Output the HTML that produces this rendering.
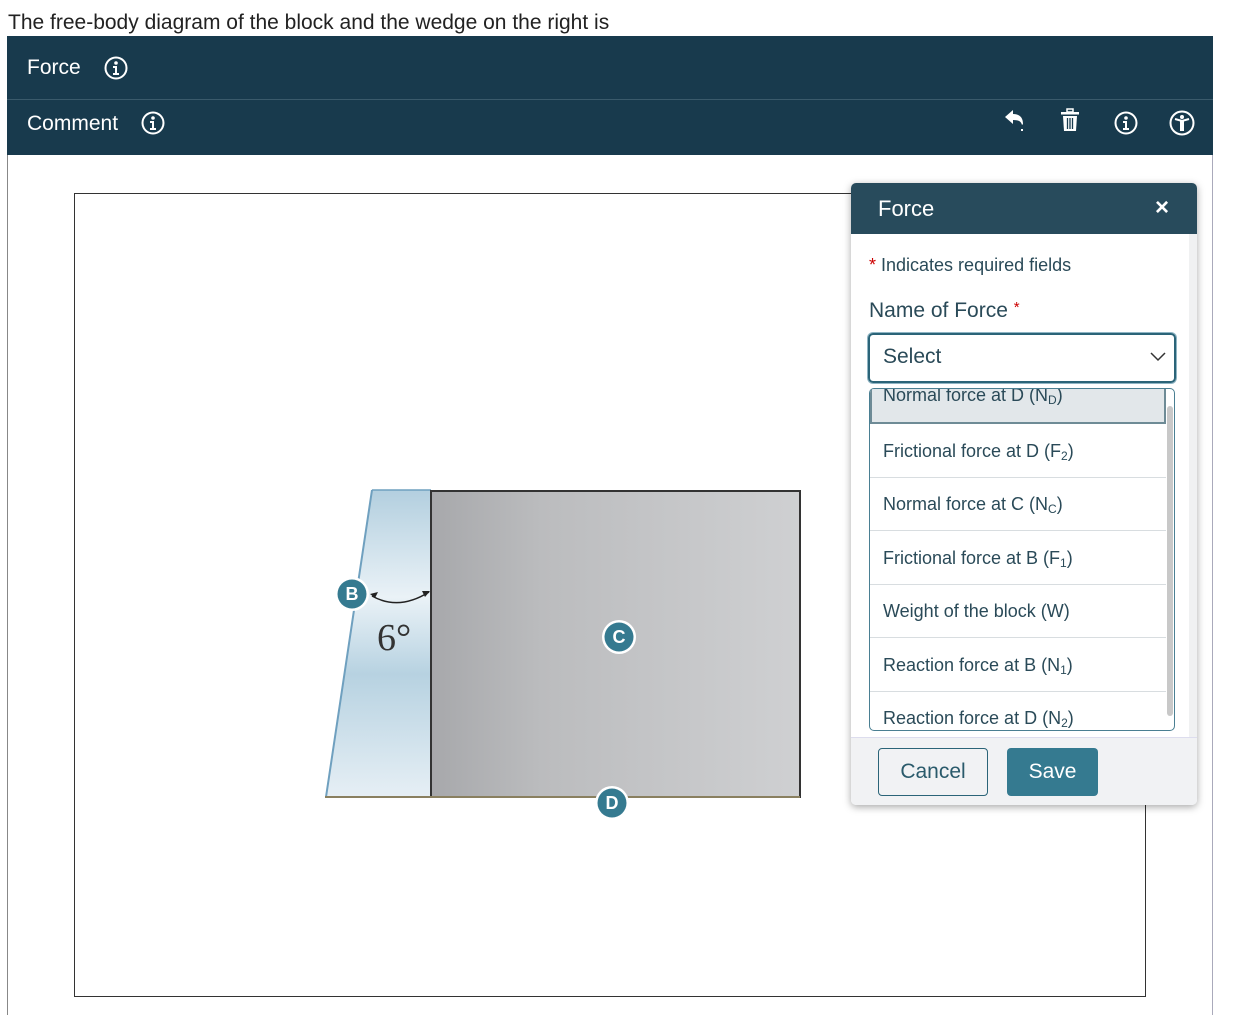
<!DOCTYPE html>
<html><head><style>
*{margin:0;padding:0;box-sizing:border-box}
body{width:1242px;height:1004px;background:#fff;font-family:"Liberation Sans",sans-serif;position:relative;overflow:hidden;color:#1f3340}
.a{position:absolute}
.t{color:#fff;font-size:21px}
.item{position:absolute;left:0;width:296px;height:54px;border-bottom:1px solid #d8dde0;font-size:18px;color:#2a4a58;padding-left:13px;line-height:54px}
sub{font-size:12px;vertical-align:-3px}
</style></head><body>
<div class="a" style="left:8px;top:11px;font-size:21px;color:#222">The free-body diagram of the block and the wedge on the right is</div>
<div class="a" style="left:7px;top:36px;width:1206px;height:119px;background:#183a4d"></div>
<div class="a" style="left:7px;top:99px;width:1206px;height:1px;background:#3a5a6b"></div>
<div class="a t" style="left:27px;top:56px">Force</div>
<div class="a t" style="left:27px;top:112px">Comment</div>
<svg class="a" style="left:104px;top:56px" width="24" height="24"><circle cx="12" cy="12" r="10.5" fill="none" stroke="#fff" stroke-width="2"/><circle cx="12" cy="7" r="1.8" fill="#fff"/><path d="M9 10h4v7h2v2H9v-2h2v-5H9z" fill="#fff"/></svg>
<svg class="a" style="left:141px;top:111px" width="24" height="24"><circle cx="12" cy="12" r="10.5" fill="none" stroke="#fff" stroke-width="2"/><circle cx="12" cy="7" r="1.8" fill="#fff"/><path d="M9 10h4v7h2v2H9v-2h2v-5H9z" fill="#fff"/></svg>
<svg class="a" style="left:1114px;top:111px" width="24" height="24"><circle cx="12" cy="12" r="10.5" fill="none" stroke="#fff" stroke-width="2"/><circle cx="12" cy="7" r="1.8" fill="#fff"/><path d="M9 10h4v7h2v2H9v-2h2v-5H9z" fill="#fff"/></svg>
<svg class="a" style="left:1169px;top:110px" width="26" height="26"><circle cx="13" cy="13" r="11.5" fill="none" stroke="#fff" stroke-width="2"/><circle cx="13" cy="7" r="2" fill="#fff"/><path d="M6 9l7 2 7-2" stroke="#fff" stroke-width="2" fill="none"/><path d="M11 11h4v10h-4z" fill="#fff"/></svg>
<svg class="a" style="left:1003px;top:108px" width="22" height="26"><path d="M2 9l8-7v4c6 0 10 3 10 10l-1 1c-1-4-4-5-9-5v4z" fill="#fff"/><rect x="18" y="21" width="2" height="2" fill="#fff"/></svg>
<svg class="a" style="left:1060px;top:107px" width="20" height="26"><rect x="1" y="5" width="18" height="2.5" fill="#fff"/><rect x="7" y="2" width="6" height="3" fill="none" stroke="#fff" stroke-width="1.5"/><path d="M3 9h14l-1 15H4z" fill="#fff"/><path d="M7.5 11v11M10 11v11M12.5 11v11" stroke="#183a4d" stroke-width="1.3"/></svg>
<div class="a" style="left:7px;top:155px;width:1206px;height:860px;border-left:1px solid #888;border-right:1px solid #aab"></div>
<div class="a" style="left:74px;top:193px;width:1072px;height:804px;border:1px solid #333"></div>
<svg class="a" style="left:320px;top:480px" width="490" height="340">
<defs><linearGradient id="w" x1="0" y1="0" x2="0" y2="1"><stop offset="0" stop-color="#b3cfdf"/><stop offset=".35" stop-color="#eaf2f7"/><stop offset=".6" stop-color="#b7d2e1"/><stop offset="1" stop-color="#e6eff5"/></linearGradient>
<linearGradient id="g" x1="0" y1="0" x2="1" y2="0"><stop offset="0" stop-color="#a7a8ab"/><stop offset=".3" stop-color="#bbbcbe"/><stop offset="1" stop-color="#cfd0d2"/></linearGradient></defs>
<path d="M52 10H111V317H6z" fill="url(#w)"/>
<path d="M52 10L6 317" stroke="#6fa0bf" stroke-width="2"/>
<path d="M52 10H111" stroke="#6fa0bf" stroke-width="1.5"/>
<rect x="111" y="11" width="369" height="306" fill="url(#g)" stroke="#333" stroke-width="2"/>
<path d="M5 317H480" stroke="#8a8060" stroke-width="2"/>
<path d="M52 116q27 15 57-4" stroke="#222" stroke-width="1.5" fill="none"/>
<path d="M50 114l8-2-3 6zM110 111l-8 0 3 6z" fill="#222"/>
<text x="57" y="170" font-family="Liberation Serif" font-size="38" fill="#333">6°</text>
<g font-family="Liberation Sans" font-weight="bold" font-size="18" fill="#fff" text-anchor="middle">
<circle cx="32" cy="114" r="17" fill="#fff"/><circle cx="32" cy="114" r="14.5" fill="#357a90"/><text x="32" y="120">B</text>
<circle cx="299" cy="157" r="17" fill="#fff"/><circle cx="299" cy="157" r="14.5" fill="#357a90"/><text x="299" y="163">C</text>
<circle cx="292" cy="323" r="17" fill="#fff"/><circle cx="292" cy="323" r="14.5" fill="#357a90"/><text x="292" y="329">D</text>
</g></svg>
<div class="a" style="left:851px;top:183px;width:346px;height:622px;background:#fff;border-radius:5px;box-shadow:0 2px 8px rgba(0,0,0,.35);overflow:hidden">
<div class="a" style="left:0;top:0;width:346px;height:51px;background:#284b5c"></div>
<div class="a" style="left:27px;top:13px;color:#fff;font-size:22px">Force</div>
<div class="a" style="left:304px;top:11px;color:#fff;font-size:24px;font-weight:bold">×</div>
<div class="a" style="left:338px;top:51px;width:8px;height:503px;background:#f0f1f2"></div>
<div class="a" style="left:18px;top:72px;font-size:18px;color:#2a4a58"><span style="color:#c00">*</span> Indicates required fields</div>
<div class="a" style="left:18px;top:116px;font-size:21px;color:#2a4a58">Name of Force <span style="color:#c00;font-size:15px;vertical-align:5px">*</span></div>
<div class="a" style="left:17px;top:150px;width:308px;height:50px;border:2px solid #2b6478;border-radius:5px;box-shadow:0 0 0 1px #8fb5c4"></div>
<div class="a" style="left:32px;top:162px;font-size:21px;color:#2a4a58">Select</div>
<svg class="a" style="left:299px;top:169px" width="16" height="10"><path d="M1 1l7 7 7-7" stroke="#333" stroke-width="1.5" fill="none"/></svg>
<div class="a" style="left:18px;top:205px;width:306px;height:343px;border:1px solid #4a7f92;border-radius:5px;overflow:hidden">
<div style="position:absolute;left:0;top:-19px;width:300px">
<div class="item" style="top:0;background:#e2e7ea;border:2px solid #6e8b96;border-top:none;line-height:50px;padding-left:11px">Normal force at D (N<sub>D</sub>)</div>
<div class="item" style="top:54px">Frictional force at D (F<sub>2</sub>)</div>
<div class="item" style="top:107px">Normal force at C (N<sub>C</sub>)</div>
<div class="item" style="top:161px">Frictional force at B (F<sub>1</sub>)</div>
<div class="item" style="top:214px">Weight of the block (W)</div>
<div class="item" style="top:268px">Reaction force at B (N<sub>1</sub>)</div>
<div class="item" style="top:321px;border:none">Reaction force at D (N<sub>2</sub>)</div>
</div>
<div class="a" style="left:297px;top:17px;width:6px;height:310px;background:#c8c8c8;border-radius:3px"></div>
</div>
<div class="a" style="left:0;top:554px;width:346px;height:68px;background:#f1f2f4;border-top:1px solid #dde"></div>
<div class="a" style="left:27px;top:565px;width:110px;height:48px;border:1px solid #2b6478;border-radius:4px;text-align:center;line-height:46px;font-size:21px;color:#2a5a6b">Cancel</div>
<div class="a" style="left:156px;top:565px;width:91px;height:48px;background:#357a90;border-radius:4px;text-align:center;line-height:48px;font-size:21px;color:#fff">Save</div>
</div>
</body></html>
